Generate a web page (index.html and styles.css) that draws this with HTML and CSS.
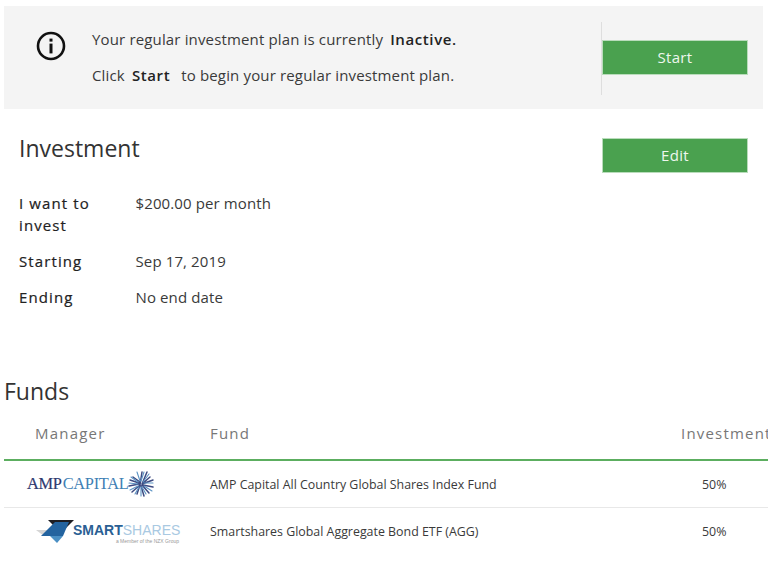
FILE: index.html
```html
<!DOCTYPE html>
<html lang="en">
<head>
<meta charset="utf-8">
<title>Regular investment plan</title>
<link rel="stylesheet" href="styles.css">
</head>
<body>
<main class="page">
  <section class="banner">
    <svg class="info-icon" width="30" height="30" viewBox="0 0 30 30" aria-hidden="true">
      <circle cx="15" cy="15" r="13" fill="none" stroke="#111" stroke-width="2.6"/>
      <rect x="13.5" y="7.6" width="3" height="3" fill="#111"/>
      <rect x="13.5" y="12.6" width="3" height="9.8" fill="#111"/>
    </svg>
    <div class="banner-text">
      <p>Your regular investment plan is currently <b class="strong-gap">Inactive.</b></p>
      <p>Click <b class="strong-inline">Start</b> to begin your regular investment plan.</p>
    </div>
    <div class="banner-action">
      <button class="btn">Start</button>
    </div>
  </section>

  <section class="investment">
    <div class="investment-head">
      <h2 class="title inv-title">Investment</h2>
      <button class="btn">Edit</button>
    </div>
    <dl class="details">
      <dt>I want to invest</dt><dd>$200.00 per month</dd>
      <dt>Starting</dt><dd>Sep 17, 2019</dd>
      <dt>Ending</dt><dd>No end date</dd>
    </dl>
  </section>

  <section class="funds">
    <h2 class="title">Funds</h2>
    <div class="row head">
      <div class="c-manager">Manager</div>
      <div class="c-fund">Fund</div>
      <div class="c-invest">Investment</div>
    </div>
    <div class="row item">
      <div class="c-manager">
        <div class="logo-amp">
          <span class="amp-a">AMP</span><span class="amp-b">CAPITAL</span>
          <svg width="26" height="26" viewBox="-13 -13 26 26" aria-hidden="true">
            <g stroke="#3d4a80" stroke-width="1.5" stroke-linecap="round">
              <path d="M-1 1L1-12M1 0L6-12M1 0L9-7M1 0L12-4M2 1L12 3M1 1L8 9M0 2L3 12M-1 1L-4 10M-1 1L-9 8M-2 0L-12 2M-2-1L-11-4M-1-2L-8-7"/>
            </g>
            <g stroke="#5b93c4" stroke-width="1.1" stroke-linecap="round">
              <path d="M0-3L3-12M2-2L8-10M3-1L12-1M3 2L11 7M1 3L5 10M0 3L0 12M-2 3L-6 10M-3 2L-11 6M-3 0L-12-1M-3-2L-10-7M-1-3L-4-12"/>
            </g>
          </svg>
        </div>
      </div>
      <div class="c-fund">AMP Capital All Country Global Shares Index Fund</div>
      <div class="c-invest">50%</div>
    </div>
    <div class="row item item-last">
      <div class="c-manager">
        <div class="logo-smart">
          <svg width="38" height="23" viewBox="0 0 38 23" aria-hidden="true">
            <polygon points="0,10 13,10 8,16" fill="#d5d5d5"/>
            <polygon points="12,0 38,0 30,8 20,8" fill="#1d1d22"/>
            <polygon points="5,16 19,2 33,2 27,16" fill="#23639f"/>
            <polygon points="14,16 27,16 21,23" fill="#4a8fc4"/>
          </svg>
          <div class="smart-words">
            <div class="smart-name"><b>SMART</b><span>SHARES</span></div>
            <div class="smart-sub">a Member of the NZX Group</div>
          </div>
        </div>
      </div>
      <div class="c-fund">Smartshares Global Aggregate Bond ETF (AGG)</div>
      <div class="c-invest">50%</div>
    </div>
  </section>
</main>
</body>
</html>
```
FILE: styles.css
```css
* { box-sizing: border-box; }
html, body { margin: 0; padding: 0; background: #fff; overflow: hidden; }
body {
  width: 768px;
  height: 562px;
  font-family: "Open Sans", "Noto Sans", sans-serif;
  color: #333;
}
.page { padding: 6px 0 0 4px; width: 768px; }

.banner {
  width: 759px;
  height: 103px;
  background: #f4f4f4;
  display: flex;
  align-items: flex-start;
  padding: 16px 15px 0 32px;
}
.info-icon { flex: none; margin: 9px 0 0; }
.banner-text { width: 507px; margin-left: 26px; padding-top: 6px; font-size: 15px; letter-spacing: 0.15px; }
.banner-text p { margin: 0; line-height: 22px; height: 36px; color: #3a3a3a; }
.banner-text b { font-weight: 600; color: #222; letter-spacing: 0.6px; }
.strong-gap { margin-left: 3px; }
.strong-inline { margin: 0 7px 0 3px; }
.banner-action {
  width: 147px;
  height: 73px;
  margin-left: 2px;
  border-left: 1px solid #dedede;
  display: flex;
  align-items: flex-start;
  padding-top: 18px;
}
.btn {
  width: 146px;
  height: 35px;
  background: #4aa14f;
  border: 1px solid #b9dcbb;
  border-radius: 0;
  color: #eef7ee;
  font: 400 15px/1 "Open Sans", sans-serif;
  letter-spacing: 0.3px;
  padding: 0;
}

.investment { padding: 0 15px; width: 759px; }
.investment-head {
  display: flex;
  justify-content: space-between;
  align-items: flex-start;
  padding-top: 29px;
}
.title { margin: 0; font-size: 23px; font-weight: 400; line-height: 24px; color: #333; }
.inv-title { margin-top: -2px; }
.details {
  margin: 19px 0 0;
  display: grid;
  grid-template-columns: 116.5px 1fr;
  row-gap: 14px;
  font-size: 15px;
  line-height: 22px;
}
.details dt { width: 90px; color: #222; font-weight: 400; letter-spacing: 1.1px; -webkit-text-stroke: 0.2px #222; }
.details dd { margin: 0; color: #3a3a3a; letter-spacing: 0.12px; }

.funds { margin-top: 71px; }
.row { display: flex; width: 764px; align-items: center; overflow: hidden; }
.c-manager { width: 206px; padding-left: 31px; flex: none; }
.c-fund { width: 420px; flex: none; }
.c-invest { width: 154px; flex: none; padding-left: 51px; white-space: nowrap; }
.head {
  height: 58px;
  border-bottom: 2px solid #5cae60;
  padding-top: 4px;
  font-size: 15px;
  color: #777;
  letter-spacing: 1.2px;
}
.item { height: 47px; font-size: 12.4px; color: #3a3a3a; border-bottom: 1px solid #e8e8e8; }
.item-last { border-bottom: 0; }
.item .c-invest { padding-left: 72px; }
.item .c-manager { padding-left: 23px; }

.logo-amp { display: flex; align-items: center; white-space: nowrap; font-family: "Liberation Serif", serif; font-size: 16.4px; letter-spacing: -0.3px; line-height: 26px; }
.amp-a { color: #2f3a70; margin-right: 1px; -webkit-text-stroke: 0.2px #2f3a70; }
.amp-b { color: #3f7fb5; }
.logo-amp svg { margin-left: 0; flex: none; }

.logo-smart { display: flex; align-items: flex-start; margin-left: 9px; }
.logo-smart svg { flex: none; margin-top: 0; margin-right: -1px; }
.smart-words { width: 110px; padding-top: 2px; }
.smart-name { font: 700 14px/16px "Liberation Sans", sans-serif; white-space: nowrap; }
.smart-name b { color: #2a5f94; }
.smart-name span { color: #a9c9e2; font-weight: 400; }
.smart-sub { font: 400 5px/6px "Liberation Sans", sans-serif; color: #999; text-align: right; padding-right: 4px; }
```
